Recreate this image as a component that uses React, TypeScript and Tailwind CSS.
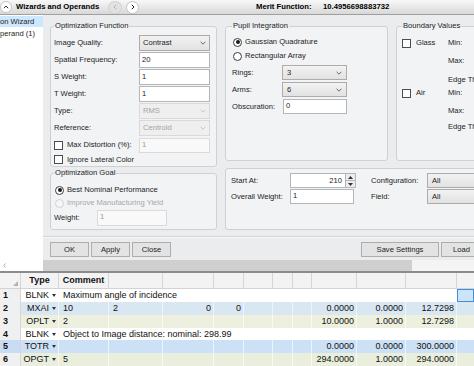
import React from 'react';

const Chevron = ({ dim }: { dim?: boolean }) => (
  <svg width="6" height="4" viewBox="0 0 6 4" className="shrink-0">
    <path d="M0.6 0.8 L3 3.2 L5.4 0.8" fill="none" stroke={dim ? '#bdbdbd' : '#5a5a5a'} strokeWidth="0.9" />
  </svg>
);

const Check = () => <span className="w-[9px] h-[9px] border border-[#4d4d4d] bg-white shrink-0" />;

const Radio = ({ on, dim }: { on?: boolean; dim?: boolean }) => (
  <span
    className={
      dim
        ? 'w-[9px] h-[9px] rounded-full border border-[#d2d2d2] bg-[#f6f6f6] shrink-0 flex items-center justify-center'
        : 'w-[9px] h-[9px] rounded-full border border-[#3c3c3c] bg-white shrink-0 flex items-center justify-center'
    }
  >
    {on && <span className="w-[4px] h-[4px] rounded-full bg-[#1a1a1a]" />}
  </span>
);

const Group = ({ title, className, children }: { title?: string; className: string; children: React.ReactNode }) => (
  <fieldset className={'border border-[#cdd0d4] rounded-[3px] bg-[#f2f3f5] min-w-0 ' + className}>
    {title && <legend className="px-[1px] leading-[10px]">{title}</legend>}
    {children}
  </fieldset>
);

const FormRow = ({ label, children }: { label: string; children: React.ReactNode }) => (
  <div className="flex items-center h-[16px]">
    <span className="w-[85px] shrink-0">{label}</span>
    {children}
  </div>
);

const COLS = [21, 38, 50, 54, 51, 30, 29, 20, 19, 45, 49, 51, 70];

type Row = {
  n: number;
  type: string;
  h: number;
  bg: string;
  numBg: string;
  text?: string;
  sel?: boolean;
  cells?: string[];
};

const ROWS: Row[] = [
  { n: 1, type: 'BLNK', h: 13, bg: 'bg-white', numBg: 'bg-[#f0f0f0]', text: 'Maximum angle of incidence', sel: true },
  { n: 2, type: 'MXAI', h: 13, bg: 'bg-[#d9e7f3]', numBg: 'bg-[#f0f0f0]', cells: ['10', '2', '0', '0', '', '', '', '0.0000', '0.0000', '12.7298', ''] },
  { n: 3, type: 'OPLT', h: 13, bg: 'bg-[#edf0de]', numBg: 'bg-[#f0f0f0]', cells: ['2', '', '', '', '', '', '', '10.0000', '1.0000', '12.7298', ''] },
  { n: 4, type: 'BLNK', h: 12, bg: 'bg-white', numBg: 'bg-[#f0f0f0]', text: 'Object to Image distance: nominal: 298.99' },
  { n: 5, type: 'TOTR', h: 13, bg: 'bg-[#cde1f6]', numBg: 'bg-[#c8ddf3]', cells: ['', '', '', '', '', '', '', '0.0000', '0.0000', '300.0000', ''] },
  { n: 6, type: 'OPGT', h: 13, bg: 'bg-[#e9efdc]', numBg: 'bg-[#f0f0f0]', cells: ['5', '', '', '', '', '', '', '294.0000', '1.0000', '294.0000', ''] },
];

const TypeCell = ({ type }: { type: string }) => (
  <div className="w-[38px] shrink-0 h-full flex items-center justify-end gap-[3px] pr-[2px] border-r border-[#ffffff99]">
    <span>{type}</span>
    <svg width="4" height="3" viewBox="0 0 4 3">
      <path d="M0 0 L4 0 L2 3 Z" fill="#333" />
    </svg>
  </div>
);

export default function App() {
  return (
    <div className="w-[474px] h-[366px] overflow-hidden bg-white font-['Liberation_Sans',Arial,sans-serif] text-[7.6px] leading-none text-[#1c1c1c]">
      {/* title bar */}
      <div className="h-[15px] flex items-center border-b border-[#a0a0a0] bg-linear-to-b from-[#f8f8f8] to-[#d8d8d8]">
        <div className="w-[12px] h-[12px] rounded-full bg-white border border-[#c6c6c6] flex items-center justify-center shrink-0">
          <svg width="6" height="4" viewBox="0 0 6 4">
            <path d="M0.8 3.2 L3 1 L5.2 3.2" fill="none" stroke="#333" strokeWidth="1" />
          </svg>
        </div>
        <span className="w-[96px] shrink-0 pl-[4px] font-bold text-[7.7px] text-black">Wizards and Operands</span>
        <div className="w-[14px] h-[13px] rounded-full bg-[#e2e2e2] border border-[#d0d0d0] flex items-center justify-center shrink-0">
          <svg width="4" height="6" viewBox="0 0 4 6">
            <path d="M3.2 0.8 L1 3 L3.2 5.2" fill="none" stroke="#b5b5b5" strokeWidth="1" />
          </svg>
        </div>
        <div className="ml-[4px] w-[13px] h-[13px] rounded-full bg-white border border-[#c3c3c3] flex items-center justify-center shrink-0">
          <svg width="4" height="6" viewBox="0 0 4 6">
            <path d="M0.8 0.8 L3 3 L0.8 5.2" fill="none" stroke="#222" strokeWidth="1" />
          </svg>
        </div>
        <span className="ml-[117px] w-[67px] shrink-0 font-bold text-[7.7px] text-black">Merit Function:</span>
        <span className="font-bold text-[7.7px] text-black">10.4956698883732</span>
      </div>

      {/* wizard area */}
      <div className="h-[245px] flex">
        <div className="w-[43px] shrink-0 bg-white pt-[1px] whitespace-nowrap overflow-hidden">
          <div className="h-[11px] bg-[#cce8ff] flex items-center">on Wizard</div>
          <div className="h-[12px] mt-[1px] flex items-center">perand (1)</div>
        </div>

        <div className="w-[431px] shrink-0 bg-[#eaecee] flex flex-col overflow-hidden">
          <div className="flex gap-[8px] pl-[7px] pt-[6px]">
            {/* left column */}
            <div className="w-[167px] shrink-0 flex flex-col gap-[1px]">
              <Group title="Optimization Function" className="h-[146px] px-[3px] pt-[4px]">
                <div className="flex flex-col gap-[1px]">
                  <FormRow label="Image Quality:">
                    <div className="w-[71px] h-[16px] border border-[#acacac] bg-linear-to-b from-[#f2f2f2] to-[#e2e2e2] flex items-center justify-between px-[3px]">
                      <span>Contrast</span>
                      <Chevron />
                    </div>
                  </FormRow>
                  <FormRow label="Spatial Frequency:">
                    <div className="w-[71px] h-[16px] border border-[#b4b6bb] bg-white flex items-center px-[2px]">20</div>
                  </FormRow>
                  <FormRow label="S Weight:">
                    <div className="w-[71px] h-[16px] border border-[#b4b6bb] bg-white flex items-center px-[2px]">1</div>
                  </FormRow>
                  <FormRow label="T Weight:">
                    <div className="w-[71px] h-[16px] border border-[#b4b6bb] bg-white flex items-center px-[2px]">1</div>
                  </FormRow>
                  <FormRow label="Type:">
                    <div className="w-[71px] h-[16px] border border-[#d9d9d9] bg-[#efefef] text-[#a3a3a3] flex items-center justify-between px-[3px]">
                      <span>RMS</span>
                      <Chevron dim />
                    </div>
                  </FormRow>
                  <FormRow label="Reference:">
                    <div className="w-[71px] h-[16px] border border-[#d9d9d9] bg-[#efefef] text-[#a3a3a3] flex items-center justify-between px-[3px]">
                      <span>Centroid</span>
                      <Chevron dim />
                    </div>
                  </FormRow>
                  <div className="flex items-center h-[16px]">
                    <Check />
                    <span className="ml-[4px] w-[72px] shrink-0">Max Distortion (%):</span>
                    <div className="w-[71px] h-[15px] border border-[#dadada] bg-[#f9f9f9] text-[#9a9a9a] px-[2px] pt-[2px]">1</div>
                  </div>
                  <div className="flex items-center h-[11px]">
                    <Check />
                    <span className="ml-[4px]">Ignore Lateral Color</span>
                  </div>
                </div>
              </Group>

              <Group title="Optimization Goal" className="h-[62px] px-[3px] pt-[6px]">
                <div className="flex flex-col gap-[1px]">
                  <div className="flex items-center h-[12px] pl-[1px]">
                    <Radio on />
                    <span className="ml-[3px]">Best Nominal Performance</span>
                  </div>
                  <div className="flex items-center h-[12px] pl-[1px] text-[#a8a8a8]">
                    <Radio dim />
                    <span className="ml-[3px]">Improve Manufacturing Yield</span>
                  </div>
                  <div className="flex items-center h-[16px]">
                    <span className="w-[43px] shrink-0">Weight:</span>
                    <div className="w-[70px] h-[16px] border border-[#dadada] bg-[#f9f9f9] text-[#9a9a9a] px-[2px] pt-[2px]">1</div>
                  </div>
                </div>
              </Group>
            </div>

            {/* right column */}
            <div className="w-[260px] shrink-0 flex flex-col">
              <div className="flex gap-[8px] h-[140px]">
                <Group title="Pupil Integration" className="w-[163px] shrink-0 pl-[6px] pt-[5px]">
                  <div className="flex items-center h-[12px] pl-[1px]">
                    <Radio on />
                    <span className="ml-[3px]">Gaussian Quadrature</span>
                  </div>
                  <div className="flex items-center h-[12px] pl-[1px] mt-[2px]">
                    <Radio />
                    <span className="ml-[3px]">Rectangular Array</span>
                  </div>
                  <div className="flex items-center h-[15px] mt-[3px]">
                    <span className="w-[50px] shrink-0">Rings:</span>
                    <div className="w-[65px] h-[15px] border border-[#acacac] bg-linear-to-b from-[#f2f2f2] to-[#e2e2e2] flex items-center justify-between px-[4px]">
                      <span>3</span>
                      <Chevron />
                    </div>
                  </div>
                  <div className="flex items-center h-[15px] mt-[2px]">
                    <span className="w-[50px] shrink-0">Arms:</span>
                    <div className="w-[65px] h-[15px] border border-[#acacac] bg-linear-to-b from-[#f2f2f2] to-[#e2e2e2] flex items-center justify-between px-[4px]">
                      <span>6</span>
                      <Chevron />
                    </div>
                  </div>
                  <div className="flex items-center h-[15px] mt-[2px]">
                    <span className="w-[51px] shrink-0">Obscuration:</span>
                    <div className="w-[64px] h-[15px] border border-[#b4b6bb] bg-white px-[2px] pt-[2px]">0</div>
                  </div>
                </Group>

                <Group title="Boundary Values" className="w-[100px] shrink-0 pl-[5px] pt-[6px]">
                  <div className="flex items-center h-[12px]">
                    <div className="w-[46px] shrink-0 flex items-center">
                      <Check />
                      <span className="ml-[5px]">Glass</span>
                    </div>
                    <span>Min:</span>
                  </div>
                  <div className="flex items-center h-[12px] mt-[6px] pl-[46px]">Max:</div>
                  <div className="flex items-center h-[12px] mt-[7px] pl-[46px] whitespace-nowrap">Edge Thickness:</div>
                  <div className="flex items-center h-[12px] mt-[1px]">
                    <div className="w-[46px] shrink-0 flex items-center">
                      <Check />
                      <span className="ml-[5px]">Air</span>
                    </div>
                    <span>Min:</span>
                  </div>
                  <div className="flex items-center h-[12px] mt-[6px] pl-[46px]">Max:</div>
                  <div className="flex items-center h-[12px] mt-[4px] pl-[46px] whitespace-nowrap">Edge Thickness:</div>
                </Group>
              </div>

              <div className="mt-[7px] h-[62px] border border-[#cdd0d4] rounded-[3px] bg-[#f2f3f5] pl-[5px] pt-[4px] flex flex-col gap-[1px]">
                <div className="flex items-center h-[15px]">
                  <span className="w-[59px] shrink-0">Start At:</span>
                  <div className="w-[66px] shrink-0 h-[15px] border border-[#b4b6bb] bg-white flex">
                    <span className="flex-1 flex items-center justify-end pr-[3px]">210</span>
                    <div className="w-[10px] h-full flex flex-col border-l border-[#b4b6bb] bg-[#ececec]">
                      <div className="flex-1 flex items-center justify-center border-b border-[#b4b6bb]">
                        <svg width="5" height="3" viewBox="0 0 5 3"><path d="M0 3 L5 3 L2.5 0 Z" fill="#333" /></svg>
                      </div>
                      <div className="flex-1 flex items-center justify-center">
                        <svg width="5" height="3" viewBox="0 0 5 3"><path d="M0 0 L5 0 L2.5 3 Z" fill="#333" /></svg>
                      </div>
                    </div>
                  </div>
                  <span className="ml-[15px] w-[56px] shrink-0">Configuration:</span>
                  <div className="w-[60px] shrink-0 h-[15px] border border-[#acacac] bg-linear-to-b from-[#f2f2f2] to-[#e2e2e2] flex items-center px-[4px]">All</div>
                </div>
                <div className="flex items-center h-[15px]">
                  <span className="w-[59px] shrink-0">Overall Weight:</span>
                  <div className="w-[64px] shrink-0 h-[15px] border border-[#b4b6bb] bg-white px-[2px] pt-[2px]">1</div>
                  <span className="ml-[17px] w-[56px] shrink-0">Field:</span>
                  <div className="w-[60px] shrink-0 h-[15px] border border-[#acacac] bg-linear-to-b from-[#f2f2f2] to-[#e2e2e2] flex items-center px-[4px]">All</div>
                </div>
              </div>
            </div>
          </div>

          <div className="mt-[6px] h-[1px] bg-[#d2d4d7]" />
          <div className="h-[1px] bg-[#f7f8f9]" />

          <div className="mt-[4px] pl-[7px] flex h-[15px]">
            <div className="w-[39px] shrink-0 border border-[#adadad] bg-[#e3e3e3] flex items-center justify-center">OK</div>
            <div className="ml-[2px] w-[39px] shrink-0 border border-[#adadad] bg-[#e3e3e3] flex items-center justify-center">Apply</div>
            <div className="ml-[2px] w-[39px] shrink-0 border border-[#adadad] bg-[#e3e3e3] flex items-center justify-center">Close</div>
            <div className="ml-[190px] w-[78px] shrink-0 border border-[#adadad] bg-[#e3e3e3] flex items-center justify-center">Save Settings</div>
            <div className="ml-[2px] w-[41px] shrink-0 border border-[#adadad] bg-[#e3e3e3] flex items-center justify-center">Load</div>
          </div>
        </div>
      </div>

      {/* scroll strip */}
      <div className="h-[11px] flex">
        <div className="w-[43px] shrink-0 bg-white flex items-center pl-[3px]">
          <svg width="3" height="5" viewBox="0 0 3 5"><path d="M2.5 0.5 L0.7 2.5 L2.5 4.5" fill="none" stroke="#9a9a9a" strokeWidth="0.8" /></svg>
        </div>
        <div className="w-[369px] shrink-0 bg-[#cfcfcf]" />
        <div className="flex-1 bg-[#f4f4f4]" />
      </div>
      <div className="h-[2px] bg-[#8b8b8b]" />

      {/* merit function editor */}
      <div className="text-[9px] text-[#111]">
        <div className="h-[16px] flex bg-[#f3f3f3] border-b border-[#d3d3d3] font-bold">
          {COLS.map((w, i) => (
            <div
              key={i}
              style={{ width: w }}
              className="shrink-0 h-full border-r border-[#d6d6d6] flex items-center justify-center"
            >
              {i === 0 && (
                <div className="w-full h-full flex items-end justify-end pr-[2px] pb-[2px]">
                  <svg width="5" height="5" viewBox="0 0 5 5"><path d="M5 0 L5 5 L0 5 Z" fill="#b3b3b3" /></svg>
                </div>
              )}
              {i === 1 && 'Type'}
              {i === 2 && 'Comment'}
            </div>
          ))}
        </div>

        {ROWS.map((r) => (
          <div key={r.n} style={{ height: r.h }} className={'flex ' + r.bg}>
            <div className={'w-[21px] shrink-0 h-full flex items-center pl-[3px] font-bold border-r border-[#d6d6d6] ' + r.numBg}>{r.n}</div>
            <TypeCell type={r.type} />
            {r.text !== undefined ? (
              <>
                <div className="w-[398px] shrink-0 h-full flex items-center pl-[4px] whitespace-nowrap">{r.text}</div>
                {r.sel && <div className="flex-1 h-full bg-[#cce4f7] border border-[#3d8ee0]" />}
              </>
            ) : (
              r.cells!.map((c, i) => (
                <div
                  key={i}
                  style={{ width: COLS[i + 2] }}
                  className={
                    i < 2
                      ? 'shrink-0 h-full flex items-center pl-[4px] border-r border-[#ffffff99]'
                      : 'shrink-0 h-full flex items-center justify-end pr-[2px] border-r border-[#ffffff99]'
                  }
                >
                  {c}
                </div>
              ))
            )}
          </div>
        ))}
      </div>
    </div>
  );
}
